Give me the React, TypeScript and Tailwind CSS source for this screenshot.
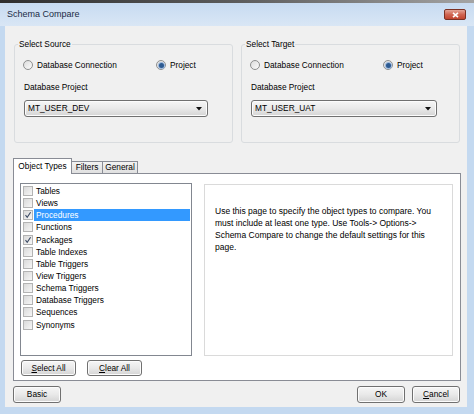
import React from "react"

type Item = { label: string; checked: boolean; selected?: boolean }

const objectTypes: Item[] = [
    { label: "Tables", checked: false },
    { label: "Views", checked: false },
    { label: "Procedures", checked: true, selected: true },
    { label: "Functions", checked: false },
    { label: "Packages", checked: true },
    { label: "Table Indexes", checked: false },
    { label: "Table Triggers", checked: false },
    { label: "View Triggers", checked: false },
    { label: "Schema Triggers", checked: false },
    { label: "Database Triggers", checked: false },
    { label: "Sequences", checked: false },
    { label: "Synonyms", checked: false },
]

// win7 style push button face
const face =
    "flex items-center border border-[#707070] rounded-[3px] bg-linear-to-b from-[#f6f6f6] via-[#e9e9e9] to-[#d4d4d4] shadow-[inset_0_0_0_1px_#fcfcfc]"
const btn = `${face} justify-center`

const Radio = ({ checked, label }: { checked: boolean; label: string }) => (
    <div className="flex items-center gap-[4px]">
        <span className="flex items-center justify-center w-[10px] h-[10px] rounded-full border border-[#8e8f8f] bg-linear-to-br from-[#dcdcdc] to-[#fbfbfb]">
            {checked && (
                <span className="w-[5px] h-[5px] rounded-full bg-[#2d5a91] shadow-[0_0_0_1px_#9cb8dc]" />
            )}
        </span>
        <span>{label}</span>
    </div>
)

const Checkbox = ({ checked }: { checked: boolean }) => (
    <span className="flex items-center justify-center w-[10px] h-[10px] border border-[#b3b3b3] bg-linear-to-br from-[#dadada] to-[#f6f6f6] shrink-0">
        {checked && (
            <svg width="8" height="8" viewBox="0 0 8 8">
                <path
                    d="M1.5 4.2 L3.2 6.3 L6.6 1.2"
                    fill="none"
                    stroke="#3b4a64"
                    strokeWidth="1.1"
                />
            </svg>
        )}
    </span>
)

const Combo = ({ value, width }: { value: string; width: string }) => (
    <div className={`${face} ${width} h-[17px] justify-between pl-[3px] pr-[5px]`}>
        <span>{value}</span>
        <svg width="6" height="4" viewBox="0 0 6 4">
            <path d="M0 0 L6 0 L3 3.5 Z" fill="#111" />
        </svg>
    </div>
)

const GroupBox = ({
    title,
    value,
    comboWidth,
}: {
    title: string
    value: string
    comboWidth: string
}) => (
    <fieldset className="w-[219px] border border-[#d9dcdf] rounded-[3px] pl-[8px] pb-[25px]">
        <legend className="ml-[-5px] px-[1px] leading-[11px]">{title}</legend>
        <div className="flex items-center h-[12px] mt-[9px]">
            <div className="w-[133px]">
                <Radio checked={false} label="Database Connection" />
            </div>
            <Radio checked label="Project" />
        </div>
        <div className="h-[12px] leading-[12px] mt-[10px] pl-[1px]">Database Project</div>
        <div className="mt-[7px] pl-[1px]">
            <Combo value={value} width={comboWidth} />
        </div>
    </fieldset>
)

export default function App() {
    return (
        <div className="w-[474px] h-[414px] overflow-hidden bg-[#c4d9f0] text-[8.3px] text-black font-['Liberation_Sans',Arial,sans-serif]">
            <div className="h-[3px] bg-linear-to-r from-[#2e2e2e] via-[#5c5c5c] to-[#a4a4a4]" />
            <div className="h-[23px] flex items-center justify-between pl-[7px] pr-[8px] bg-linear-to-b from-[#c7dbf1] to-[#d9e6f5]">
                <span className="text-[9px] text-[#1b2b45]">Schema Compare</span>
                <div className="flex items-center justify-center w-[22px] h-[11px] rounded-[2px] border border-[#7b3124] bg-linear-to-b from-[#e3a497] via-[#d06552] to-[#c1442f]">
                    <svg width="7" height="6" viewBox="0 0 7 6">
                        <path d="M1 0.8 L6 5.2 M6 0.8 L1 5.2" stroke="#fff" strokeWidth="1.6" />
                    </svg>
                </div>
            </div>
            <div className="flex">
                <div className="w-[5px]" />
                <div className="w-[462px] h-[381px] bg-[#f0f0f0] flex flex-col pl-[8px]">
                    <div className="flex gap-[8px] mt-[13px] ml-[1px]">
                        <GroupBox title="Select Source" value="MT_USER_DEV" comboWidth="w-[184px]" />
                        <GroupBox title="Select Target" value="MT_USER_UAT" comboWidth="w-[186px]" />
                    </div>

                    <div className="flex items-end h-[15px] mt-[15px]">
                        <div className="relative z-10 w-[59px] h-[16px] mb-[-1px] flex items-center justify-center border border-b-0 border-[#898c95] bg-white">
                            Object Types
                        </div>
                        <div className="w-[31px] h-[12px] flex items-center justify-center border border-l-0 border-b-0 border-[#898c95] bg-linear-to-b from-[#f2f2f2] to-[#e0e0e0]">
                            Filters
                        </div>
                        <div className="w-[35px] h-[12px] flex items-center justify-center border border-l-0 border-b-0 border-[#898c95] bg-linear-to-b from-[#f2f2f2] to-[#e0e0e0]">
                            General
                        </div>
                    </div>
                    <div className="w-[448px] h-[208px] border border-[#898c95] bg-white flex flex-col pt-[9px] pl-[6px]">
                        <div className="flex">
                            <div className="w-[172px] h-[173px] border border-[#828790] bg-white py-[1px] pl-[2px] pr-[1px]">
                                {objectTypes.map((item) => (
                                    <div key={item.label} className="flex items-center h-[12.15px]">
                                        <Checkbox checked={item.checked} />
                                        <span
                                            className={`flex-1 ml-[1px] pl-[2px] leading-[12px] ${
                                                item.selected ? "bg-[#3399ff] text-white" : ""
                                            }`}
                                        >
                                            {item.label}
                                        </span>
                                    </div>
                                ))}
                            </div>
                            <div className="ml-[12px] mt-[1px] w-[249px] h-[172px] border border-[#dadada] bg-white pl-[10px] pt-[20px] text-[8.5px] leading-[12px]">
                                <div>Use this page to specify the object types to compare. You</div>
                                <div>must include at least one type. Use Tools-&gt; Options-&gt;</div>
                                <div>Schema Compare to change the default settings for this</div>
                                <div>page.</div>
                            </div>
                        </div>
                        <div className="flex gap-[11px] mt-[4px] ml-[1px]">
                            <div className={`${btn} w-[55px] h-[16px]`}>
                                <span>
                                    <u>S</u>elect All
                                </span>
                            </div>
                            <div className={`${btn} w-[55px] h-[16px]`}>
                                <span>
                                    <u>C</u>lear All
                                </span>
                            </div>
                        </div>
                    </div>

                    <div className="flex justify-between mt-[5px] pr-[7px]">
                        <div className={`${btn} w-[48px] h-[17px]`}>Basic</div>
                        <div className="flex gap-[7px]">
                            <div className={`${btn} w-[48px] h-[17px]`}>OK</div>
                            <div className={`${btn} w-[48px] h-[17px]`}>
                                <span>
                                    <u>C</u>ancel
                                </span>
                            </div>
                        </div>
                    </div>
                </div>
            </div>
        </div>
    )
}
